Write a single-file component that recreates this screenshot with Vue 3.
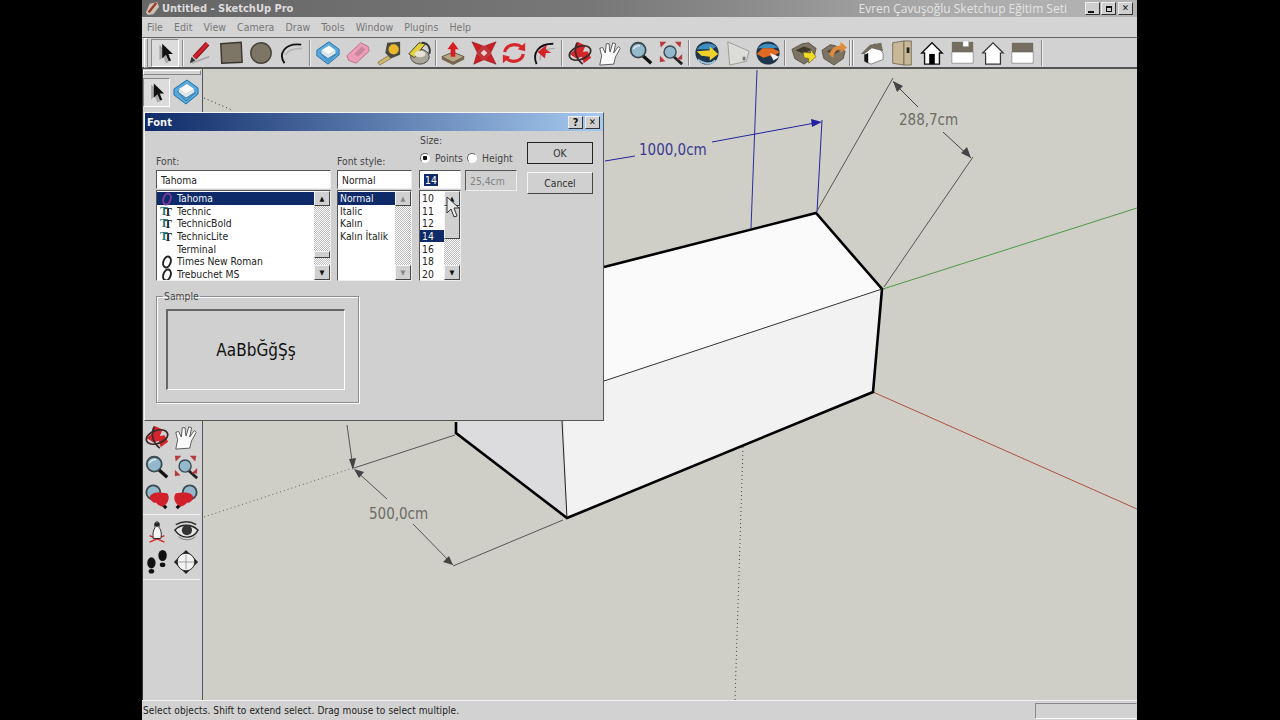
<script setup>
const menus = ['File', 'Edit', 'View', 'Camera', 'Draw', 'Tools', 'Window', 'Plugins', 'Help']

// sep is the width class of the separator in front of each group
const toolGroups = [
  { sep: 'first', tools: ['pencil', 'rect', 'circle', 'arc'] },
  { sep: '', tools: ['comp', 'eraser', 'tape', 'paint'] },
  { sep: 'tight', tools: ['push', 'move', 'rotate', 'follow'] },
  { sep: 'mid', tools: ['orbit', 'hand', 'zoom', 'extents'] },
  { sep: '', tools: ['globe', 'sheet', 'globe2'] },
  { sep: 'mid', tools: ['box', 'box2'] },
  { sep: 'double', tools: ['iso', 'door', 'front', 'top', 'back', 'left'] }
]

const paletteRows = [
  ['orbit', 'hand'],
  ['zoom', 'extents'],
  ['prev', 'next']
]

const fonts = [
  { name: 'Tahoma', type: 'open' },
  { name: 'Technic', type: 'tt' },
  { name: 'TechnicBold', type: 'tt' },
  { name: 'TechnicLite', type: 'tt' },
  { name: 'Terminal', type: '' },
  { name: 'Times New Roman', type: 'open' },
  { name: 'Trebuchet MS', type: 'open' }
]
const styles = ['Normal', 'Italic', 'Kalın', 'Kalın İtalik']
const sizes = ['10', '11', '12', '14', '16', '18', '20']
</script>

<template>
  <div class="screen">
    <svg class="defs" width="0" height="0">
      <defs>
        <symbol id="i-select" viewBox="0 0 28 28">
          <path d="M8 5v17l4-4 3 7 3-1-3-7h5z" fill="#a8a8a8" />
          <path d="M11 4v16l4-4 3 7 2.500-1-3-7h5z" fill="#111" />
        </symbol>
        <symbol id="i-pencil" viewBox="0 0 28 28">
          <path d="M5 25L24 18" stroke="#aaa" stroke-width="2" />
          <path d="M8 19L22 4" stroke="#7a1016" stroke-width="5.500" />
          <path d="M8 19L22 4" stroke="#d4222c" stroke-width="3.500" />
          <path d="M3 25l2-7 4 4z" fill="#333" />
        </symbol>
        <symbol id="i-rect" viewBox="0 0 28 28">
          <path d="M3 4L25 2.500 26 24 4 25z" fill="#7d7565" stroke="#38352e" stroke-width="1.500" />
        </symbol>
        <symbol id="i-circle" viewBox="0 0 28 28">
          <circle cx="14" cy="14" r="11" fill="#7d7565" stroke="#45423a" stroke-width="1.500" />
        </symbol>
        <symbol id="i-arc" viewBox="0 0 28 28">
          <path d="M7 25C0 15 7 3 25 5" fill="none" stroke="#111" stroke-width="2" />
          <path d="M8 16C11 10 18 9 26 9" fill="none" stroke="#b4b4b4" stroke-width="2" />
        </symbol>
        <symbol id="i-comp" viewBox="0 0 28 28">
          <path d="M2 11L15 2 26 10V16L14 26 2 17z" fill="#5aa9dc" stroke="#1f6fa8" />
          <path d="M7 11L15 6 22 11 14 16z" fill="#fafaf6" />
          <path d="M7 11V15L14 20 22 15V11L14 16z" fill="#dfe6e8" />
          <path d="M7 15L14 20 22 15M5 13L14 23 24 14" fill="none" stroke="#2b6f9c" stroke-width=".8" />
        </symbol>
        <symbol id="i-eraser" viewBox="0 0 28 28">
          <path d="M2 17L17 3 25 7 26 12 12 25 4 22z" fill="#ee9db8" stroke="#b8708a" />
          <path d="M10 15L18 7 22 10 14 18z" fill="#c9869c" />
        </symbol>
        <symbol id="i-tape" viewBox="0 0 28 28">
          <path d="M12 3L26 2 26 16 16 20 10 14z" fill="#4b4a42" />
          <circle cx="19" cy="10" r="5.500" fill="#e9b92a" />
          <path d="M13 17L2 24 4 27 16 20z" fill="#d1b56a" stroke="#665a30" stroke-width=".6" />
        </symbol>
        <symbol id="i-paint" viewBox="0 0 28 28">
          <ellipse cx="15" cy="18" rx="10" ry="8" fill="#aaa59a" stroke="#444" />
          <path d="M3 15L14 3 21 4 9 19z" fill="#e2cf3a" stroke="#3b3b28" />
          <path d="M17 3C24 3 27 9 25 15" fill="none" stroke="#333" stroke-width="2" />
          <ellipse cx="15" cy="15" rx="6" ry="3.500" fill="#e5e2d5" />
        </symbol>
        <symbol id="i-push" viewBox="0 0 28 28">
          <path d="M2 18L14 13 26 18 14 24z" fill="#b9a888" stroke="#5d5340" />
          <path d="M2 18V21L14 27 26 21V18L14 24z" fill="#75684f" />
          <path d="M14 2L20 10H16.500V18H11.500V10H8z" fill="#d81e22" />
        </symbol>
        <symbol id="i-move" viewBox="0 0 28 28">
          <path d="M1 2L12 6 11 9 9 11 6 12zM27 2L22 12 19 11 17 9 16 6zM27 26L16 22 17 19 19 17 22 16zM3 26L6 16 9 17 11 19 12 22z" fill="#cf1f26" stroke="#7c1418" stroke-width=".6" />
          <path d="M12 6H16L17 9 19 11 22 12V16L19 17 17 19 16 22H12L11 19 9 17 6 16V12L9 11 11 9z" fill="#c0353a" />
          <rect x="11.500" y="11.500" width="5" height="5" fill="#e8d5d5" transform="rotate(45 14 14)" />
        </symbol>
        <symbol id="i-rotate" viewBox="0 0 28 28">
          <path d="M4 13C5 6 15 2 23 8" fill="none" stroke="#d8272b" stroke-width="3.500" />
          <path d="M24 15C23 22 13 26 6 20" fill="none" stroke="#d8272b" stroke-width="3.500" />
          <path d="M26 3L26 12 18 10zM2 25L2 16 10 18z" fill="#d8272b" />
        </symbol>
        <symbol id="i-follow" viewBox="0 0 28 28">
          <path d="M6 26C1 14 8 4 24 4" fill="none" stroke="#111" stroke-width="2" />
          <path d="M10 22C9 14 14 9 26 9" fill="none" stroke="#aaa" stroke-width="1.500" />
          <path d="M7 13L17 5 16 10 22 14 16 14 15 20z" fill="#d3222a" />
        </symbol>
        <symbol id="i-orbit" viewBox="0 0 28 28">
          <path d="M11 2L20 6 17 13 22 12 26 19 18 25 16 18 10 20 3 15 9 10z" fill="#d4252b" />
          <ellipse cx="14" cy="14" rx="12" ry="7" transform="rotate(-20 14 14)" fill="none" stroke="#3a2a2a" stroke-width="1.800" />
          <path d="M11 3C7 10 9 20 17 26" fill="none" stroke="#3a2a2a" stroke-width="1.800" />
        </symbol>
        <symbol id="i-hand" viewBox="0 0 28 28">
          <path d="M3 27L5 17 3 9 6 8 9 14 10 4 13 4 14 13 17 3 20 4 18 14 23 7 25 9 20 18 18 26z" fill="#fafafa" stroke="#444" stroke-width=".9" />
        </symbol>
        <symbol id="i-zoom" viewBox="0 0 28 28">
          <path d="M16 17L25 25" stroke="#111" stroke-width="3.500" />
          <circle cx="11" cy="11" r="8" fill="#95b9cc" stroke="#3c4a52" stroke-width="2" />
          <path d="M6 10C7 7 10 6 13 6" fill="none" stroke="#e5eff3" stroke-width="1.500" />
        </symbol>
        <symbol id="i-extents" viewBox="0 0 28 28">
          <path d="M17 18L26 26" stroke="#222" stroke-width="3" />
          <circle cx="13" cy="13" r="6.500" fill="#95b9cc" stroke="#3c4a52" stroke-width="1.500" />
          <path d="M2 2H9L3 8zM25 2H18L24 8zM2 24V17L8 23zM20 21L26 21 26 15z" fill="#b83a40" />
        </symbol>
        <symbol id="i-prev" viewBox="0 0 28 28">
          <path d="M16 18L24 26" stroke="#111" stroke-width="3.500" />
          <circle cx="10" cy="9" r="7.500" fill="#95b9cc" stroke="#3c4a52" stroke-width="2" />
          <path d="M6 14C9 8 16 9 25 10 28 14 27 20 21 24 18 25 14 22 13 20 10 21 7 18 6 14z" fill="#d2202b" />
        </symbol>
        <symbol id="i-next" viewBox="0 0 28 28">
          <path d="M12 18L4 26" stroke="#111" stroke-width="3.500" />
          <circle cx="18" cy="9" r="7.500" fill="#95b9cc" stroke="#3c4a52" stroke-width="2" />
          <path d="M22 14C19 8 12 9 3 10 0 14 1 20 7 24 10 25 14 22 15 20 18 21 21 18 22 14z" fill="#d2202b" />
        </symbol>
        <symbol id="i-walk" viewBox="0 0 28 28">
          <path d="M6 25L22 18M6 18L22 25" stroke="#d22" stroke-width="1.500" />
          <path d="M14 3C17 3 17 7 16 9 19 12 19 18 18 21H10C9 16 10 12 12 9 11 7 11 3 14 3z" fill="#f4f4f4" stroke="#222" />
          <circle cx="14" cy="6" r="2.500" fill="#222" />
        </symbol>
        <symbol id="i-eye" viewBox="0 0 28 28">
          <path d="M2 12C8 5 20 5 27 12 22 21 10 23 2 12z" fill="#e4e4e4" stroke="#222" stroke-width="1.500" />
          <circle cx="15" cy="12" r="5.500" fill="#333" />
          <path d="M3 6C10 2 19 2 25 6" fill="none" stroke="#333" stroke-width="1.500" />
          <path d="M6 19C12 24 20 23 24 19" fill="none" stroke="#777" />
        </symbol>
        <symbol id="i-feet" viewBox="0 0 28 28">
          <ellipse cx="8" cy="15" rx="4.500" ry="6" fill="#111" />
          <ellipse cx="8" cy="24" rx="3" ry="2.500" fill="#111" />
          <ellipse cx="20" cy="7" rx="4.500" ry="6" fill="#111" />
          <ellipse cx="20" cy="17" rx="3" ry="2.500" fill="#111" />
        </symbol>
        <symbol id="i-position" viewBox="0 0 28 28">
          <path d="M14 1L27 14 14 27 1 14z" fill="#222" />
          <circle cx="14" cy="14" r="9.500" fill="#f2f2f2" stroke="#222" />
          <path d="M5 14H23M14 6V22" stroke="#888" stroke-width=".8" />
        </symbol>
        <symbol id="i-globe" viewBox="0 0 28 28">
          <circle cx="14" cy="14" r="12.500" fill="#20364a" />
          <path d="M3 10C8 3 18 2 24 7L20 10H9z" fill="#3e8fc0" />
          <path d="M3 12L17 11V7L26 15 17 22V18L8 17z" fill="#f0d22a" />
          <path d="M4 21C10 26 18 27 23 22" fill="none" stroke="#9fc6dc" stroke-width="2" />
        </symbol>
        <symbol id="i-sheet" viewBox="0 0 28 28">
          <path d="M3 2L26 12 23 23 5 27z" fill="#dcdcd8" stroke="#9a9a94" />
          <path d="M19 18h3v4h-3z" fill="#777" />
        </symbol>
        <symbol id="i-globe2" viewBox="0 0 28 28">
          <circle cx="14" cy="14" r="12.500" fill="#20364a" />
          <path d="M3 9C8 3 18 2 25 8L18 9H8z" fill="#3e8fc0" />
          <path d="M2 15L8 9 19 9 27 13 22 16 24 21 16 17 9 19z" fill="#e06a24" />
          <path d="M16 14L26 18 20 22z" fill="#eee" />
        </symbol>
        <symbol id="i-box" viewBox="0 0 28 28">
          <path d="M1 10L12 4 19 3 27 9 25 18 14 26 4 20z" fill="#7e7464" stroke="#3b362d" stroke-width=".7" />
          <path d="M5 11L14 7 22 10 14 15z" fill="#3e382e" />
          <path d="M13 13L21 14V10L27 18 19 25V20L14 19z" fill="#f0da26" stroke="#50481a" stroke-width=".6" />
        </symbol>
        <symbol id="i-box2" viewBox="0 0 28 28">
          <path d="M1 11L10 5 15 6 26 12 24 20 14 27 3 20z" fill="#7e7464" stroke="#3b362d" stroke-width=".7" />
          <path d="M6 12L14 9 20 12 13 16z" fill="#4a4438" />
          <path d="M9 16C10 10 15 6 21 6V2L28 8 21 14V10C17 10 14 13 13 19z" fill="#e08a3c" />
        </symbol>
        <symbol id="i-iso" viewBox="0 0 28 28">
          <path d="M7 14L18 4 27 14V21L14 26 7 23z" fill="#fff" stroke="#555" stroke-width=".7" />
          <path d="M3 15L13 5 25 3 27 12 15 9 7 15z" fill="#756e60" />
          <path d="M7 16L11 14V25L7 23z" fill="#111" />
        </symbol>
        <symbol id="i-door" viewBox="0 0 28 28">
          <path d="M4 3L16 1H24V27H16L4 25z" fill="#c9b896" stroke="#5f5949" stroke-width=".8" />
          <path d="M16 1V27" stroke="#5f5949" />
          <path d="M19 8h3v6h-3z" fill="#222" />
        </symbol>
        <symbol id="i-front" viewBox="0 0 28 28">
          <path d="M3 14L14 3 25 14H22V26H6V14z" fill="#fff" stroke="#111" stroke-width="1.500" />
          <path d="M11 15h6v11h-6z" fill="#000" />
        </symbol>
        <symbol id="i-top" viewBox="0 0 28 28">
          <path d="M2 2H25V13H2z" fill="#756e60" />
          <path d="M2 13H25V25H2z" fill="#fff" stroke="#666" stroke-width=".6" />
          <path d="M14 1h6v6h-6z" fill="#fff" stroke="#aaa" stroke-width=".5" />
        </symbol>
        <symbol id="i-back" viewBox="0 0 28 28">
          <path d="M3 14L14 3 25 14H22V26H6V14z" fill="#fff" stroke="#333" stroke-width="1.300" />
        </symbol>
        <symbol id="i-left" viewBox="0 0 28 28">
          <path d="M2 3H25V13H2z" fill="#756e60" />
          <path d="M2 13H25V25H2z" fill="#fff" stroke="#666" stroke-width=".6" />
        </symbol>
        <symbol id="i-open" viewBox="0 0 14 14">
          <ellipse cx="7" cy="7" rx="3.600" ry="5.600" transform="rotate(20 7 7)" fill="none" stroke="currentColor" stroke-width="2" />
        </symbol>
      </defs>
    </svg>

    <div class="window">
      <header class="titlebar">
        <svg class="title-icon" viewBox="0 0 16 16" width="15" height="15">
          <path d="M1 12L5 3 13 1 15 6 9 14 3 15z" fill="#c9c2b4" />
          <path d="M4 12L12 2" stroke="#a33228" stroke-width="2.500" />
        </svg>
        <span class="title-text">Untitled - SketchUp Pro</span>
        <span class="title-right">Evren Çavuşoğlu Sketchup Eğitim Seti</span>
        <div class="win-buttons">
          <span class="win-btn"><i class="min-mark"></i></span>
          <span class="win-btn"><i class="max-mark"></i></span>
          <span class="win-btn gap">✕</span>
        </div>
      </header>

      <nav class="menubar">
        <span v-for="m in menus" :key="m" class="menu-item">{{ m }}</span>
      </nav>

      <div class="toolbar">
        <i class="grip"></i>
        <span class="tool pressed"><svg width="26" height="26"><use href="#i-select" /></svg></span>
        <template v-for="(group, i) in toolGroups" :key="i">
          <i class="sep" :class="group.sep"></i>
          <i v-if="group.sep === 'double'" class="sep double-b"></i>
          <span v-for="t in group.tools" :key="t" class="tool"><svg width="26" height="26"><use :href="'#i-' + t" /></svg></span>
        </template>
        <i class="sep"></i>
      </div>

      <div class="main">
        <aside class="palette">
          <i class="palette-grip"></i>
          <div class="palette-row">
            <span class="pal-tool pressed"><svg width="25" height="25"><use href="#i-select" /></svg></span>
            <span class="pal-tool"><svg width="28" height="28"><use href="#i-comp" /></svg></span>
          </div>
          <div class="palette-lower">
            <div v-for="(row, i) in paletteRows" :key="i" class="palette-row">
              <span v-for="t in row" :key="t" class="pal-tool"><svg width="26" height="26"><use :href="'#i-' + t" /></svg></span>
            </div>
            <i class="pal-sep"></i>
            <div class="palette-row">
              <span class="pal-tool"><svg width="26" height="26"><use href="#i-walk" /></svg></span>
              <span class="pal-tool"><svg width="26" height="26"><use href="#i-eye" /></svg></span>
            </div>
            <div class="palette-row">
              <span class="pal-tool"><svg width="26" height="26"><use href="#i-feet" /></svg></span>
              <span class="pal-tool"><svg width="26" height="26"><use href="#i-position" /></svg></span>
            </div>
            <i class="pal-sep"></i>
          </div>
        </aside>

        <svg class="canvas" viewBox="203 69 934 631" width="934" height="631">
          <!-- model -->
          <path d="M604 267L816 213 882 289 604 381z" fill="#fafafa" />
          <path d="M562 395L882 289 873 392 567 518z" fill="#f2f2f3" />
          <path d="M455 380L562 380 567 518 455 433z" fill="#dcdcdf" />

          <!-- axes and guides -->
          <path d="M883 289L1137 208" stroke="#4e9a45" fill="none" />
          <path d="M873 392L1137 509" stroke="#b0503f" fill="none" />
          <path d="M757 70L751 228" stroke="#2c2c9c" fill="none" />
          <path d="M204 517L353 468" stroke="#5c6a50" stroke-dasharray="1 3" fill="none" />
          <path d="M204 98L232 110" stroke="#333" stroke-dasharray="1 3" fill="none" />
          <path d="M743 447L735 700" stroke="#444" stroke-dasharray="1 3" fill="none" />

          <!-- edges -->
          <path d="M604 267L816 213 882 289 873 392 567 518 456 433V422" fill="none" stroke="#000" stroke-width="2.600" />
          <path d="M882 289L604 381" fill="none" stroke="#333" />
          <path d="M562 421L567 518" fill="none" stroke="#222" />

          <!-- dimensions -->
          <path d="M822 120L817 212" stroke="#2222a0" fill="none" />
          <path d="M605 161L635 156M712 142L815 123" stroke="#2222a0" fill="none" />
          <path d="M822 122L811 119 812 127z" fill="#2222a0" />
          <text x="639" y="155" class="dim blue">1000,0cm</text>

          <path d="M817 211L893 78M884 287L973 157" stroke="#555" fill="none" />
          <path d="M893 82L918 107M943 132L971 158" stroke="#444" fill="none" />
          <path d="M893 81L903 86 897 92zM971 158L961 153 967 147z" fill="#444" />
          <text x="899" y="125" class="dim">288,7cm</text>

          <path d="M347 425L353 468M455 435L354 468M355 470L387 499M413 524L453 565M453 566L563 520" stroke="#555" fill="none" />
          <path d="M353 470L349 459 356 458zM354 469L364 472 359 478zM453 565L443 562 449 556z" fill="#444" />
          <text x="369" y="519" class="dim">500,0cm</text>
        </svg>
      </div>

      <footer class="statusbar">
        <span class="status-text">Select objects. Shift to extend select. Drag mouse to select multiple.</span>
        <span class="status-box"></span>
      </footer>
    </div>

    <section class="dialog">
      <header class="dlg-title">
        <span>Font</span>
        <div class="dlg-buttons">
          <span class="win-btn help">?</span>
          <span class="win-btn gap">✕</span>
        </div>
      </header>

      <div class="dlg-body">
        <div class="col col-font">
          <div class="col-head"><label>Font:</label></div>
          <div class="field">Tahoma</div>
          <div class="list">
            <div class="items">
              <div v-for="(f, i) in fonts" :key="f.name" class="item" :class="{ active: i === 0 }">
                <svg v-if="f.type === 'open'" class="font-open" width="14" height="14"><use href="#i-open" /></svg>
                <span v-if="f.type === 'tt'" class="font-tt">T</span>
                {{ f.name }}
              </div>
            </div>
            <div class="scroll">
              <span class="arrow">▲</span>
              <span class="thumb thumb-low"></span>
              <span class="arrow">▼</span>
            </div>
          </div>
        </div>

        <div class="col col-style">
          <div class="col-head"><label>Font style:</label></div>
          <div class="field">Normal</div>
          <div class="list">
            <div class="items">
              <div v-for="(s, i) in styles" :key="s" class="item plain" :class="{ active: i === 0 }">{{ s }}</div>
            </div>
            <div class="scroll disabled">
              <span class="arrow">▲</span>
              <span class="arrow">▼</span>
            </div>
          </div>
        </div>

        <div class="col col-size">
          <div class="col-head size-head">
            <label>Size:</label>
            <div class="radios">
              <span class="radio on"></span><span class="radio-label">Points</span>
              <span class="radio"></span><span class="radio-label">Height</span>
            </div>
          </div>
          <div class="field"><span class="sel">14</span></div>
          <div class="list">
            <div class="items">
              <div v-for="s in sizes" :key="s" class="item plain" :class="{ active: s === '14' }">{{ s }}</div>
            </div>
            <div class="scroll">
              <span class="arrow">▲</span>
              <span class="thumb thumb-high"></span>
              <span class="arrow">▼</span>
            </div>
          </div>
        </div>

        <div class="col col-height">
          <div class="col-head"></div>
          <div class="field off">25,4cm</div>
        </div>

        <div class="col col-actions">
          <button class="btn default">OK</button>
          <button class="btn">Cancel</button>
        </div>
      </div>

      <fieldset class="sample">
        <legend>Sample</legend>
        <div class="sample-box">AaBbĞğŞş</div>
      </fieldset>

      <svg class="cursor" viewBox="0 0 16 24" width="16" height="24">
        <path d="M2 1V17L6 13 9 21 12 20 9 12H14z" fill="#e8e8e8" stroke="#333" />
      </svg>
    </section>
  </div>
</template>

<style>
html, body {
  margin: 0;
  background: #000;
}
</style>

<style scoped>
.screen {
  position: relative;
  width: 1280px;
  height: 720px;
  background: #000;
  overflow: hidden;
  font-family: "DejaVu Sans Condensed", "DejaVu Sans", sans-serif;
  font-size: 10.3px;
  color: #222;
}

.defs {
  position: absolute;
}

.window {
  display: flex;
  flex-direction: column;
  width: 995px;
  height: 720px;
  margin-left: 142px;
  background: #d2d2d2;
}

.titlebar {
  display: flex;
  align-items: center;
  height: 17px;
  padding-left: 3px;
  background: linear-gradient(90deg, #666 0%, #777 45%, #8a8a8a 60%, #aaa 80%, #b4b4b4 100%);
  color: #dcdcdc;
}

.title-text {
  margin-left: 2px;
  font-weight: bold;
  font-size: 11px;
}

.title-right {
  margin-left: auto;
  font-family: "Open Sans", sans-serif;
  font-size: 12px;
  color: #e4e4e4;
}

.win-buttons {
  display: flex;
  margin: 0 4px 0 17px;
}

.win-btn {
  position: relative;
  display: flex;
  align-items: center;
  justify-content: center;
  width: 15px;
  height: 13px;
  margin-left: 1px;
  background: #cfcfcf;
  border: 1px solid;
  border-color: #eee #333 #333 #eee;
  box-sizing: border-box;
  font-size: 9px;
  font-weight: bold;
  color: #111;
  line-height: 1;
}

.win-btn.gap {
  margin-left: 2px;
}

.min-mark {
  align-self: flex-end;
  width: 6px;
  height: 2px;
  margin: 0 3px 1px 0;
  background: #111;
}

.max-mark {
  width: 6px;
  height: 6px;
  border: 1px solid #111;
  border-top-width: 2px;
  box-sizing: border-box;
}

.menubar {
  display: flex;
  align-items: center;
  height: 20px;
  padding-left: 5px;
  box-sizing: border-box;
  background: #d4d4d4;
  color: #777;
  font-size: 10.5px;
  letter-spacing: 0.05px;
}

.menu-item {
  margin-right: 11px;
}

.toolbar {
  display: flex;
  align-items: center;
  height: 32px;
  padding-top: 1px;
  box-sizing: border-box;
  border-top: 1px solid #666;
  border-bottom: 2px solid #555;
  background: #d2d2d2;
}

.grip {
  width: 2px;
  height: 28px;
  margin: 0 3px 0 2px;
  border: 1px solid;
  border-color: #fff #888 #888 #fff;
}

.tool {
  display: flex;
  align-items: center;
  justify-content: center;
  width: 30.4px;
  height: 28px;
}

.tool.pressed {
  width: 28px;
  height: 28px;
  background: #dcdcdc;
  border: 1px solid;
  border-color: #888 #fff #fff #888;
  box-sizing: border-box;
}

/* separators are 2px wide, the margins set how much room the group gets */
.sep {
  width: 1px;
  height: 26px;
  margin: 0 2px;
  background: #888;
  border-right: 1px solid #f0f0f0;
}

.sep.first {
  margin: 0 1px 0 3px;
}

.sep.tight {
  margin: 0 1px;
}

.sep.mid {
  margin: 0 2px 0 1px;
}

.sep.double {
  margin: 0 1px 0 0;
}

.sep.double-b {
  margin: 0 2px 0 0;
}

.main {
  display: flex;
  flex: 1;
  min-height: 0;
}

.palette {
  display: flex;
  flex-direction: column;
  width: 61px;
  flex-shrink: 0;
  box-sizing: border-box;
  padding-left: 0;
  background: #d2d2d2;
  border-right: 1px solid #555;
  border-left: 1px solid #333;
}

.palette-grip {
  height: 3px;
  margin: 1px 1px 2px 0;
  border: 1px solid;
  border-color: #fff #888 #888 #fff;
}

.palette-row {
  display: flex;
  height: 30px;
  align-items: center;
}

.palette-lower {
  margin-top: 315px;
}

.pal-tool {
  display: flex;
  align-items: center;
  justify-content: center;
  width: 28px;
  height: 29px;
  margin-right: 2px;
}

.pal-tool.pressed {
  background: #dcdcdc;
  border: 1px solid;
  border-color: #888 #fff #fff #888;
  box-sizing: border-box;
}

.pal-sep {
  display: block;
  height: 1px;
  margin: 2px 2px 2px 0;
  background: #f0f0f0;
}

.canvas {
  display: block;
  background: #cfcfc7;
}

.dim {
  font-family: "DejaVu Sans Condensed", "DejaVu Sans", sans-serif;
  font-size: 15px;
  fill: #6c6c66;
}

.dim.blue {
  fill: #3a3a94;
}

.statusbar {
  display: flex;
  align-items: center;
  justify-content: space-between;
  height: 20px;
  box-sizing: border-box;
  border-top: 1px solid #f0f0f0;
  background: #d2d2d2;
  color: #222;
}

.status-text {
  font-size: 10px;
  margin-left: 1px;
  letter-spacing: 0.1px;
}

.status-box {
  width: 102px;
  height: 16px;
  border: 1px solid;
  border-color: #888 transparent #fff #888;
  box-sizing: border-box;
}

.dialog {
  position: absolute;
  left: 144px;
  top: 112px;
  width: 460px;
  height: 309px;
  box-sizing: border-box;
  background: #d0d0d0;
  border: 1px solid;
  border-color: #f4f4f4 #555 #555 #f4f4f4;
}

.dlg-title {
  display: flex;
  align-items: center;
  justify-content: space-between;
  height: 18px;
  padding-left: 2px;
  background: linear-gradient(90deg, #0e2a68, #a6caf0);
  color: #f4f4f4;
  font-weight: bold;
  font-size: 11px;
}

.dlg-buttons {
  display: flex;
  margin-right: 3px;
}

.win-btn.help {
  font-size: 11px;
}

.dlg-body {
  display: flex;
  padding-left: 11px;
}

.col {
  display: flex;
  flex-direction: column;
}

.col-font {
  width: 175px;
}

.col-style {
  width: 75px;
  margin-left: 6px;
}

.col-size {
  width: 42px;
  margin-left: 7px;
}

.col-height {
  width: 52px;
  margin-left: 4px;
}

.col-actions {
  width: 66px;
  margin-left: 10px;
  padding-top: 11px;
}

.col-head {
  display: flex;
  flex-direction: column;
  justify-content: flex-end;
  height: 39px;
  padding-bottom: 3px;
  box-sizing: border-box;
  color: #444;
}

.size-head {
  justify-content: flex-start;
  padding: 3px 0 0 1px;
  white-space: nowrap;
}

.radios {
  display: flex;
  align-items: center;
  width: 100px;
  margin-top: 6px;
}

.radio {
  flex-shrink: 0;
  width: 10px;
  height: 10px;
  border-radius: 50%;
  box-sizing: border-box;
  background: #fff;
  border: 1px solid;
  border-color: #666 #fff #fff #666;
}

.radio.on {
  background: radial-gradient(circle, #111 0 2px, #fff 2.5px);
}

.radio-label {
  flex-shrink: 0;
  width: 32px;
  margin-left: 5px;
  color: #444;
}

.field {
  display: flex;
  align-items: center;
  height: 19px;
  padding-left: 4px;
  box-sizing: border-box;
  background: #fff;
  border: 1px solid;
  border-color: #555 #eee #eee #555;
}

.field.off {
  height: 21px;
  background: #d0d0d0;
  color: #808080;
}

.sel {
  padding: 0 1px;
  background: #0e2a68;
  color: #fff;
}

.list {
  display: flex;
  height: 91px;
  margin-top: 1px;
  box-sizing: border-box;
  background: #fff;
  border: 1px solid;
  border-color: #555 #eee #eee #555;
  overflow: hidden;
}

.items {
  flex: 1;
  min-width: 0;
  padding-top: 1px;
}

.item {
  display: flex;
  align-items: center;
  height: 12.6px;
  white-space: nowrap;
  padding-left: 20px;
  position: relative;
  color: #222;
}

.item.plain {
  padding-left: 2px;
}

.item.active {
  background: #0e2a68;
  color: #f4f4f4;
}

.font-open {
  position: absolute;
  left: 3px;
  top: 0;
  color: #222;
}

.item.active .font-open {
  color: #7a3aa0;
}

.font-tt {
  position: absolute;
  left: 3px;
  top: 0;
  height: 12px;
  font-family: "Liberation Serif", serif;
  font-weight: bold;
  font-size: 12px;
  line-height: 12px;
  color: #1e7a7a;
  text-shadow: 4px 1px 0 #222;
}

.scroll {
  display: flex;
  flex-direction: column;
  justify-content: space-between;
  width: 16px;
  flex-shrink: 0;
  background: repeating-conic-gradient(#fff 0 25%, #bbb 0 50%) 0 0 / 2px 2px;
  position: relative;
}

.arrow {
  display: flex;
  align-items: center;
  justify-content: center;
  height: 15px;
  background: #d0d0d0;
  border: 1px solid;
  border-color: #f4f4f4 #444 #444 #f4f4f4;
  box-sizing: border-box;
  font-size: 7px;
  color: #111;
}

.scroll.disabled .arrow {
  color: #888;
}

.thumb {
  position: absolute;
  left: 0;
  right: 0;
  background: #d0d0d0;
  border: 1px solid;
  border-color: #f4f4f4 #444 #444 #f4f4f4;
  box-sizing: border-box;
}

.thumb-low {
  top: 60px;
  height: 7px;
}

.thumb-high {
  top: 15px;
  height: 33px;
}

.btn {
  display: block;
  width: 66px;
  height: 22px;
  margin-bottom: 8px;
  padding: 0;
  font: inherit;
  color: #333;
  background: #d0d0d0;
  border: 1px solid;
  border-color: #f4f4f4 #444 #444 #f4f4f4;
}

.btn.default {
  outline: 1px solid #222;
  outline-offset: -1px;
}

.sample {
  display: block;
  width: 203px;
  height: 112px;
  margin: 10px 0 0 11px;
  padding: 0;
  box-sizing: border-box;
  border: 1px solid #8c8c8c;
  box-shadow: 1px 1px 0 #fff, inset 1px 1px 0 #fff;
  color: #444;
}

.sample legend {
  margin-left: 6px;
  padding: 0 1px;
  line-height: 10px;
}

.sample-box {
  display: flex;
  align-items: center;
  justify-content: center;
  width: 179px;
  height: 81px;
  margin: 8px 0 0 9px;
  box-sizing: border-box;
  border: 1px solid;
  border-color: #666 #fff #fff #666;
  border-width: 2px 1px 1px 2px;
  font-size: 17px;
  color: #111;
}

.cursor {
  position: absolute;
  left: 300px;
  top: 83px;
}
</style>
